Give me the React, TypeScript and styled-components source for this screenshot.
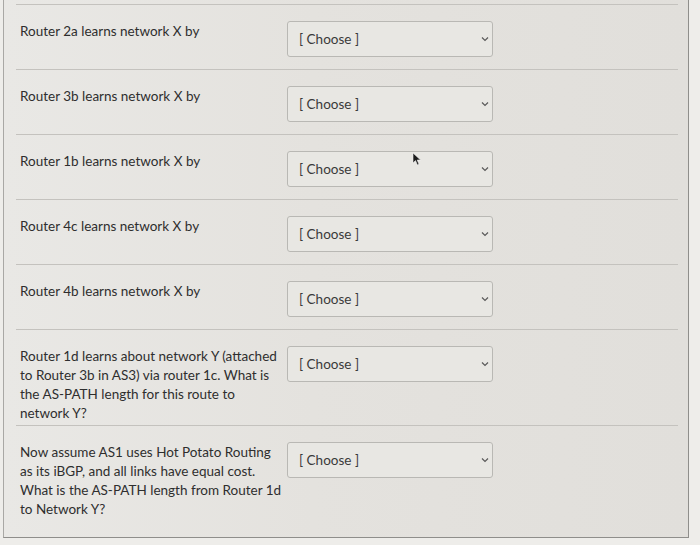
import styled, { createGlobalStyle } from 'styled-components'

const GlobalStyle = createGlobalStyle`
    html, body {
        margin: 0;
        padding: 0;
        background: #ecebe8;
        font-family: Lato, "Open Sans", sans-serif;
    }
`

const Page = styled.div`
    width: 700px;
    height: 545px;
    position: relative;
    overflow: hidden;
    background: #eeedea;
`

const Panel = styled.div`
    margin-left: 3px;
    width: 686px;
    padding: 4px 10px 0 12px;
    box-sizing: border-box;
    background: linear-gradient(90deg, #e9e8e5 0%, #e4e2de 45%, #e1dfdb 100%);
    border-left: 1px solid #a9a8a5;
    border-right: 1px solid #8f8e8b;
    border-bottom: 1px solid #8f8e8b;
`

const Row = styled.div<{ $last?: boolean }>`
    display: flex;
    align-items: flex-start;
    gap: 4px;
    border-top: 1px solid #c4c2be;
    padding: 16px 0 ${p => (p.$last ? 18 : 2)}px 4px;
`

const Question = styled.div`
    width: 263px;
    margin-top: 1px;
    font-size: 13.5px;
    line-height: 19px;
    color: #2e2e2e;
    white-space: pre-line;
`

const SelectWrap = styled.div`
    position: relative;
    width: 206px;
    height: 36px;
    margin-bottom: 10px;
`

const Select = styled.select`
    appearance: none;
    width: 100%;
    height: 100%;
    box-sizing: border-box;
    padding: 0 24px 0 11px;
    border: 1px solid #b9b8b4;
    border-radius: 3px;
    background: #e8e7e3;
    font-family: Lato, "Open Sans", sans-serif;
    font-size: 13.5px;
    color: #3a3a3a;
    outline: none;
`

const Chevron = styled.svg`
    position: absolute;
    right: 4px;
    top: 15px;
    width: 8px;
    height: 6px;
    pointer-events: none;
`

const Cursor = styled.svg`
    position: absolute;
    left: 412px;
    top: 152px;
    width: 10px;
    height: 14px;
`

const questions = [
    'Router 2a learns network X by',
    'Router 3b learns network X by',
    'Router 1b learns network X by',
    'Router 4c learns network X by',
    'Router 4b learns network X by',
    'Router 1d learns about network Y (attached\nto Router 3b in AS3) via router 1c.  What is\nthe AS-PATH length for this route to\nnetwork Y?',
    'Now assume AS1 uses Hot Potato Routing\nas its iBGP, and all links have equal cost.\nWhat is the AS-PATH length from Router 1d\nto Network Y?',
]

const Dropdown = () =>
    <SelectWrap>
        <Select defaultValue=''>
            <option value=''>[ Choose ]</option>
        </Select>
        <Chevron viewBox='0 0 8 6'>
            <path d='M1 1.5 L4 4.5 L7 1.5' fill='none' stroke='#5a5a5a' strokeWidth='1.2' />
        </Chevron>
    </SelectWrap>

const App = () =>
    <Page>
        <GlobalStyle />
        <Panel>
            {questions.map((q, i) =>
                <Row key={i} $last={i === questions.length - 1}>
                    <Question>{q}</Question>
                    <Dropdown />
                </Row>
            )}
        </Panel>
        <Cursor viewBox='0 0 10 14'>
            <path d='M1 1 L1 11 L3.5 8.6 L5.4 13 L7 12.3 L5.2 8 L8.6 8 Z' fill='#1c1c1c' stroke='#f2f2f2' strokeWidth='0.6' />
        </Cursor>
    </Page>

export default App
